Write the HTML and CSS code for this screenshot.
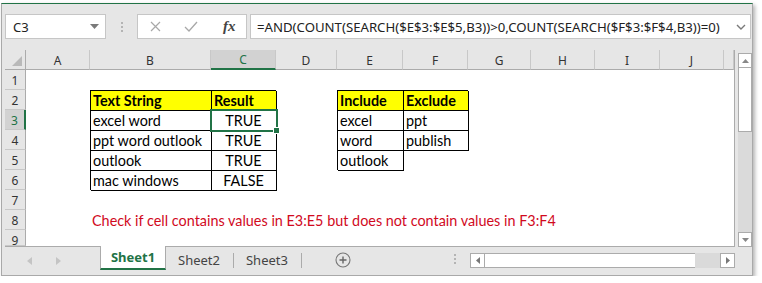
FILE: index.html
```html
<!DOCTYPE html>
<html lang="en">
<head>
    <meta charset="UTF-8">
    <title>Check if cell contains values</title>
    <link rel="stylesheet" href="styles.css">
</head>
<body>

<div class="window">
    <!-- Name box and formula bar -->
    <div class="formula-bar">
        <div class="name-box">
            <span>C3</span>
            <svg width="9" height="5" viewBox="0 0 9 5"><path d="M0 0h9L4.5 5z" fill="#7a7a7a"/></svg>
        </div>
        <div class="grip"><i></i><i></i><i></i></div>
        <div class="fx-box">
            <svg class="btn-x" width="11" height="11" viewBox="0 0 11 11"><path d="M1 1l9 9M10 1l-9 9" stroke="#a8a8a8" stroke-width="1.2" fill="none"/></svg>
            <svg class="btn-ok" width="14" height="11" viewBox="0 0 14 11"><path d="M1 6l4 4 8-9" stroke="#a8a8a8" stroke-width="1.3" fill="none"/></svg>
            <span class="fx">fx</span>
        </div>
        <div class="formula">
            <span>=AND(COUNT(SEARCH($E$3:$E$5,B3))&gt;0,COUNT(SEARCH($F$3:$F$4,B3))=0)</span>
            <svg width="10" height="6" viewBox="0 0 10 6"><path d="M1 1l4 4 4-4" stroke="#7a7a7a" stroke-width="1.4" fill="none"/></svg>
        </div>
    </div>

    <!-- Worksheet -->
    <div class="sheet">
        <div class="grid" id="grid"></div>
        <div class="vscroll">
            <div class="sbtn"><svg width="7" height="4" viewBox="0 0 7 4"><path d="M0 4h7L3.5 0z" fill="#888"/></svg></div>
            <div class="vthumb"></div>
            <div class="vtrack"></div>
            <div class="sbtn"><svg width="7" height="4" viewBox="0 0 7 4"><path d="M0 0h7L3.5 4z" fill="#888"/></svg></div>
        </div>
    </div>

    <!-- Sheet tabs -->
    <div class="tabs">
        <div class="nav">
            <svg width="5" height="8" viewBox="0 0 5 8"><path d="M5 0v8L0 4z" fill="#c4c4c4"/></svg>
            <svg width="5" height="8" viewBox="0 0 5 8"><path d="M0 0v8l5-4z" fill="#c4c4c4"/></svg>
        </div>
        <div class="tab active">Sheet1</div>
        <div class="tab">Sheet2</div>
        <div class="tab">Sheet3</div>
        <div class="add">
            <svg width="16" height="16" viewBox="0 0 16 16"><circle cx="8" cy="8" r="7" stroke="#777" stroke-width="1.1" fill="none"/><path d="M8 4.5v7M4.5 8h7" stroke="#666" stroke-width="1.4"/></svg>
        </div>
        <div class="spacer"></div>
        <div class="grip small"><i></i><i></i><i></i></div>
        <div class="hscroll">
            <div class="sbtn"><svg width="4" height="7" viewBox="0 0 4 7"><path d="M4 0v7L0 3.5z" fill="#777"/></svg></div>
            <div class="hthumb"></div>
            <div class="htrack"></div>
            <div class="sbtn"><svg width="4" height="7" viewBox="0 0 4 7"><path d="M0 0v7l4-3.5z" fill="#777"/></svg></div>
        </div>
    </div>
</div>

<script>
    // Column letters and cell contents
    let columns = ['A', 'B', 'C', 'D', 'E', 'F', 'G', 'H', 'I', 'J', ''];
    let cells = {
        B2: ['Text String', 'head'], C2: ['Result', 'head'],
        B3: ['excel word', 'box'], C3: ['TRUE', 'box center sel'],
        B4: ['ppt word outlook', 'box'], C4: ['TRUE', 'box center'],
        B5: ['outlook', 'box'], C5: ['TRUE', 'box center'],
        B6: ['mac windows', 'box'], C6: ['FALSE', 'box center'],
        E2: ['Include', 'head'], F2: ['Exclude', 'head'],
        E3: ['excel', 'box'], F3: ['ppt', 'box'],
        E4: ['word', 'box'], F4: ['publish', 'box'],
        E5: ['outlook', 'box'],
        B8: ['Check if cell contains values in E3:E5 but does not contain values in F3:F4', 'note']
    };

    let grid = document.getElementById('grid');

    function addCell(text, className) {
        let div = document.createElement('div');
        div.className = className;
        div.innerText = text;
        grid.appendChild(div);
    }

    // Header row
    addCell('', 'corner');
    columns.forEach(col => {
        addCell(col, col === 'C' ? 'col-head active' : 'col-head');
    });

    // Rows 1 to 9
    for (let row = 1; row <= 9; row++) {
        addCell(row, row === 3 ? 'row-head active' : 'row-head');
        columns.forEach(col => {
            let cell = cells[col + row];
            if (cell) {
                addCell(cell[0], 'cell ' + cell[1]);
            } else {
                addCell('', 'cell');
            }
        });
    }
</script>

</body>
</html>
```

FILE: styles.css
```css
body {
    margin: 0;
    background-color: #fff;
    font-family: "Noto Sans", sans-serif;
}
.window {
    box-sizing: border-box;
    width: 752px;
    margin: 3px 0 0 1px;
    background-color: #e6e6e6;
    border: 1px solid #a9a9a9;
    border-top: 1px solid #217346;
    box-shadow: 2px 2px 4px rgba(0, 0, 0, 0.3);
}

/* formula bar */
.formula-bar {
    display: flex;
    align-items: flex-start;
    height: 46px;
    box-sizing: border-box;
    padding: 10px 1px 0 3px;
}
.name-box, .fx-box, .formula {
    flex-shrink: 0;
    box-sizing: border-box;
    height: 25px;
    background-color: #fff;
    border: 1px solid #c6c6c6;
    display: flex;
    align-items: center;
}
.name-box {
    width: 101px;
    justify-content: space-between;
    padding: 0 6px 0 7px;
    font-size: 13px;
    color: #222;
}
.grip {
    flex-shrink: 0;
    width: 31px;
    height: 25px;
    display: flex;
    flex-direction: column;
    align-items: center;
    justify-content: center;
    gap: 2px;
}
.grip i {
    width: 2px;
    height: 2px;
    background-color: #b4b4b4;
}
.fx-box {
    width: 110px;
}
.btn-x {
    margin-left: 12px;
}
.btn-ok {
    margin-left: 23px;
}
.fx {
    margin-left: 25px;
    font-family: "Liberation Serif", serif;
    font-style: italic;
    font-weight: bold;
    font-size: 15px;
    color: #444;
}
.formula {
    flex: 1;
    min-width: 0;
    margin-left: 3px;
    justify-content: space-between;
    padding: 0 4px 0 6px;
    font-size: 13.2px;
    white-space: nowrap;
    color: #222;
}

/* worksheet */
.sheet {
    display: flex;
    padding-left: 3px;
}
.grid {
    display: grid;
    grid-template-columns: 21px 64px 121px 65px 61px 66px 65px 63px 64px 65px 64px 10px;
    grid-template-rows: repeat(9, 20px) 16px;
    background-color: #fff;
    border-right: 1px solid #ababab;
    border-bottom: 1px solid #ababab;
    overflow: hidden;
}
.corner, .col-head, .row-head {
    box-sizing: border-box;
    background-color: #e6e6e6;
    font-size: 12px;
    color: #333;
    display: flex;
    align-items: center;
    justify-content: center;
}
.corner {
    border-right: 1px solid #ababab;
    border-bottom: 1px solid #ababab;
    position: relative;
}
.corner::after {
    content: "";
    position: absolute;
    right: 3px;
    bottom: 3px;
    border-style: solid;
    border-width: 0 0 10px 10px;
    border-color: transparent transparent #b9b9b9 transparent;
}
.col-head {
    border-right: 1px solid #c8c8c8;
    border-bottom: 1px solid #ababab;
    padding-top: 1px;
}
.row-head {
    border-right: 1px solid #ababab;
    border-bottom: 1px solid #c8c8c8;
    align-items: flex-start;
    padding-top: 2px;
}
.col-head.active {
    background-color: #d2d2d2;
    color: #217346;
    border-bottom: 2px solid #217346;
}
.row-head.active {
    background-color: #d2d2d2;
    color: #217346;
    border-right: 2px solid #217346;
}
.cell {
    font-family: "Lato", sans-serif;
    font-size: 14.4px;
    line-height: 22px;
    padding-left: 3px;
    white-space: nowrap;
    color: #000;
}
.cell.box {
    box-shadow: inset 1px 1px 0 #000, 1px 1px 0 #000;
}
.cell.head {
    background-color: #ffff00;
    font-weight: bold;
    box-shadow: inset 1px 1px 0 #000, 1px 1px 0 #000;
}
.cell.center {
    text-align: center;
    padding-left: 0;
}
.cell.sel {
    position: relative;
}
.cell.sel::after {
    content: "";
    position: absolute;
    top: -1px;
    left: -1px;
    right: -2px;
    bottom: -2px;
    border: 2px solid #217346;
}
.cell.sel::before {
    content: "";
    position: absolute;
    right: -4px;
    bottom: -4px;
    width: 5px;
    height: 5px;
    background-color: #217346;
    border: 1px solid #fff;
    z-index: 1;
}
.cell.note {
    color: #d10a1e;
    padding-left: 2px;
}

/* vertical scrollbar */
.vscroll {
    width: 14px;
    margin-left: 3px;
    padding-top: 3px;
    display: flex;
    flex-direction: column;
}
.sbtn {
    box-sizing: border-box;
    background-color: #fff;
    border: 1px solid #ababab;
    display: flex;
    align-items: center;
    justify-content: center;
}
.vscroll .sbtn {
    height: 15px;
}
.vthumb {
    height: 63px;
    background-color: #fff;
    border: 1px solid #ababab;
    border-top: none;
}
.vtrack {
    flex: 1;
    background-color: #dadada;
}

/* sheet tabs */
.tabs {
    display: flex;
    height: 28px;
    padding: 0 17px 0 3px;
    font-size: 13px;
}
.nav {
    width: 95px;
    display: flex;
    align-items: center;
    gap: 24px;
    padding-left: 22px;
    box-sizing: border-box;
}
.tab {
    align-self: center;
    height: 15px;
    line-height: 15px;
    padding: 0 13px 0 12px;
    border-right: 1px solid #ababab;
    color: #444;
    margin-top: -2px;
}
.tab.active {
    align-self: flex-start;
    margin-top: -1px;
    width: 66px;
    box-sizing: border-box;
    height: 24px;
    line-height: 22px;
    padding: 0;
    text-align: center;
    background-color: #fff;
    border-left: 1px solid #ababab;
    border-right: 1px solid #ababab;
    border-bottom: 2px solid #217346;
    color: #217346;
    font-weight: bold;
}
.add {
    margin-left: 33px;
    display: flex;
    align-items: center;
    margin-top: -2px;
}
.spacer {
    flex: 1;
}
.grip.small {
    width: 3px;
    height: 28px;
    margin-right: 14px;
    margin-top: -2px;
}
.hscroll {
    display: flex;
    height: 15px;
    margin-top: 6px;
}
.hscroll .sbtn {
    width: 15px;
}
.hthumb {
    width: 210px;
    background-color: #fff;
    border-top: 1px solid #ababab;
    border-bottom: 1px solid #ababab;
    box-sizing: border-box;
}
.htrack {
    width: 25px;
    background-color: #dadada;
}
```
